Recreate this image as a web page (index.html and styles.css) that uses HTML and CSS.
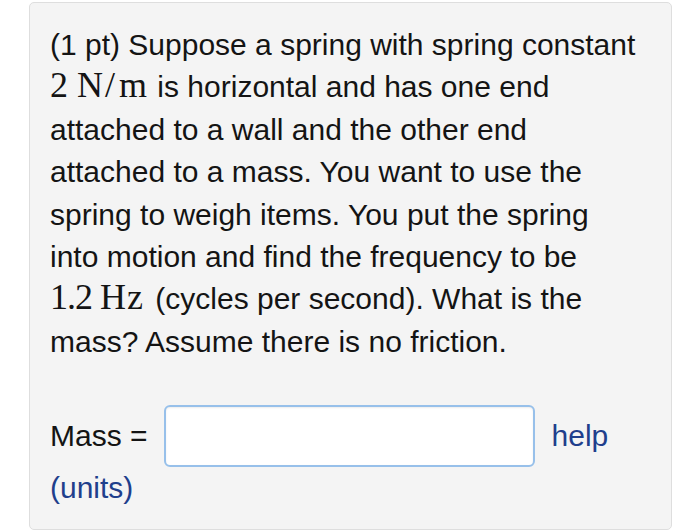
FILE: index.html
```html
<!DOCTYPE html>
<html lang="en">
<head>
<meta charset="utf-8">
<title>Spring problem</title>
<link rel="stylesheet" href="styles.css">
</head>
<body>
<div class="card">
  <p class="problem">(1 pt) Suppose a spring with spring constant<br><span class="math"><span class="num">2</span><span class="unit">N</span><span class="slash">/</span><span class="unit m">m</span></span> is horizontal and has one end<br>attached to a wall and the other end<br>attached to a mass. You want to use the<br>spring to weigh items. You put the spring<br>into motion and find the frequency to be<br><span class="math"><span class="num dec">1.2</span><span class="unit hz">Hz</span></span> (cycles per second). What is the<br>mass? Assume there is no friction.</p>
  <div class="answer-row">
    <span class="label">Mass =</span>
    <input class="answer" type="text" aria-label="Mass">
    <a class="help" href="#">help</a>
  </div>
  <a class="units" href="#">(units)</a>
</div>
</body>
</html>
```

FILE: styles.css
```css
html, body {
  margin: 0;
  padding: 0;
  background: #ffffff;
}

body {
  font-family: "Liberation Sans", Arial, sans-serif;
  color: #141414;
}

.card {
  margin: 2px 0 0 29px;
  width: 643px;
  height: 528px;
  box-sizing: border-box;
  background: #f4f4f4;
  border: 1px solid #dedede;
  border-radius: 5px;
  padding: 21px 20px 0 20px;
}

.problem {
  margin: 0;
  font-size: 30px;
  line-height: 42.4px;
  white-space: nowrap;
}

.math {
  font-family: "Liberation Serif", "Times New Roman", serif;
  font-size: 36px;
  line-height: 30px;
}

.math .num {
  margin-right: 9px;
}

.math .slash {
  margin: 0 4px 0 2px;
}

.math .m {
  margin-right: 2px;
}

.math .dec {
  letter-spacing: -1px;
  margin-right: 8px;
}

.math .hz {
  letter-spacing: 1px;
  margin-right: 3px;
}

.answer-row {
  display: flex;
  align-items: center;
  margin-top: 42px;
  height: 62px;
  font-size: 30px;
}

.label {
  margin-right: 16px;
}

.answer {
  width: 371px;
  height: 62px;
  box-sizing: border-box;
  border: 2px solid #97c0ea;
  border-radius: 6px;
  background: #ffffff;
  box-shadow: inset 0 1px 2px rgba(0, 0, 0, 0.08);
  margin: 0;
  padding: 0 10px;
  font-size: 30px;
}

.help {
  margin-left: 17px;
  color: #1f3f8c;
  text-decoration: none;
}

.units {
  display: block;
  font-size: 30px;
  line-height: 42px;
  color: #1f3f8c;
  text-decoration: none;
}
```
